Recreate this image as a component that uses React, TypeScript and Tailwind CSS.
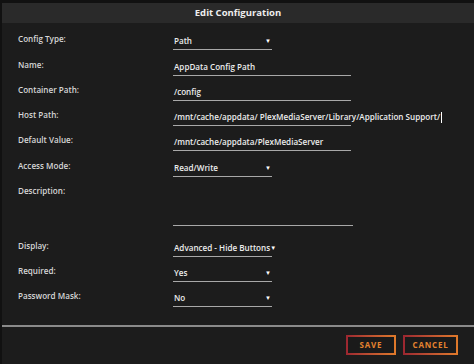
import React from 'react';

type Row = {
  label: string;
  value: string;
  select?: boolean;
  wide?: boolean;
  cursor?: boolean;
  tall?: boolean;
};

const rows: Row[] = [
  { label: 'Config Type:', value: 'Path', select: true },
  { label: 'Name:', value: 'AppData Config Path' },
  { label: 'Container Path:', value: '/config' },
  { label: 'Host Path:', value: '/mnt/cache/appdata/ PlexMediaServer/Library/Application Support/', cursor: true },
  { label: 'Default Value:', value: '/mnt/cache/appdata/PlexMediaServer' },
  { label: 'Access Mode:', value: 'Read/Write', select: true },
  { label: 'Description:', value: '', tall: true, wide: true },
  { label: 'Display:', value: 'Advanced - Hide Buttons', select: true },
  { label: 'Required:', value: 'Yes', select: true },
  { label: 'Password Mask:', value: 'No', select: true },
];

const FormRow: React.FC<{ row: Row }> = ({ row }) => {
  const width = row.select ? 'w-[99px]' : row.wide ? 'w-[180px]' : 'w-[178px]';
  return (
    <div className={`flex items-start ${row.tall ? 'h-[54.7px]' : 'h-[25.3px]'}`}>
      <div className="w-[171px] shrink-0 pl-[16px] leading-[12px] text-[#d6d6d6]">{row.label}</div>
      <div className={`${width} shrink-0 border-b-[1.5px] border-[#a8a8a8] pt-[2px] pb-[2px]`}>
        <div className={`flex items-center justify-between whitespace-nowrap leading-[12px] text-[#ececec] ${row.tall ? 'h-[35.7px]' : 'h-[12px]'}`}>
          <span className="pl-[1px] flex items-center">
            {row.value}
            {row.cursor && <span className="ml-[1px] inline-block h-[11px] w-[1px] bg-white" />}
          </span>
          {row.select && <span className="text-[6px] leading-none pr-[1px] text-white">▼</span>}
        </div>
      </div>
    </div>
  );
};

const App: React.FC = () => {
  return (
    <div
      className="w-[474px] h-[364px] bg-[#111111] pt-[3px] pl-[2px] overflow-hidden text-[8.1px] font-semibold"
      style={{ fontFamily: '"Open Sans", "Liberation Sans", sans-serif' }}
    >
      <div className="h-full bg-[#1c1c1c] flex flex-col">
        {/* Header */}
        <div className="h-[20px] bg-[#2a2a2a] flex items-center justify-center">
          <span className="text-[9.5px] font-bold text-[#eeeeee]">Edit Configuration</span>
        </div>

        {/* Form */}
        <div className="pt-[10.3px] flex flex-col">
          {rows.map((row) => (
            <FormRow key={row.label} row={row} />
          ))}
        </div>

        {/* Footer */}
        <div className="mt-[9px] h-[2px] bg-[#8a8a8a]" />
        <div className="flex justify-end gap-[7px] pr-[16px] pt-[8px]">
          {['SAVE', 'CANCEL'].map((b) => (
            <div
              key={b}
              className={`p-[2px] bg-linear-to-r from-[#9c2630] to-[#e07a2a] ${b === 'SAVE' ? 'w-[50px]' : 'w-[55px]'} h-[20px]`}
            >
              <div className="h-full bg-[#1a1a1a] flex items-center justify-center">
                <span className="text-[8px] font-bold tracking-[0.1em] text-[#e5832f]">{b}</span>
              </div>
            </div>
          ))}
        </div>
      </div>
    </div>
  );
};

export default App;
